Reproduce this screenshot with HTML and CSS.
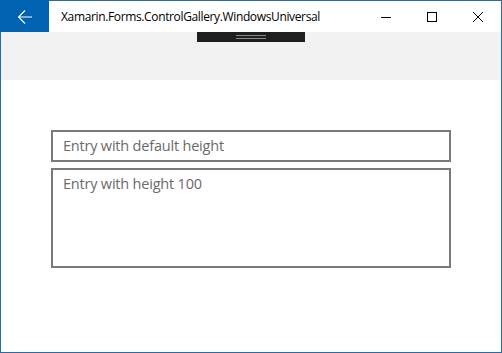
FILE: index.html
```html
<!DOCTYPE html>
<html>
<head>
<meta charset="utf-8">
<link rel="stylesheet" href="styles.css">
</head>
<body>
<div class="window">
  <div class="titlebar">
    <div class="back">
      <svg width="16" height="16" viewBox="0 0 16 16"><path d="M15 8H1.5M8 1.5L1.5 8L8 14.5" fill="none" stroke="#fff" stroke-width="1.1"/></svg>
    </div>
    <div class="title">Xamarin.Forms.ControlGallery.WindowsUniversal</div>
    <div class="caption">
      <div class="cbtn"><svg width="10" height="10" viewBox="0 0 10 10"><path d="M0 5.5H10" stroke="#000" stroke-width="1"/></svg></div>
      <div class="cbtn"><svg width="10" height="10" viewBox="0 0 10 10"><rect x="0.5" y="0.5" width="9" height="9" fill="none" stroke="#000" stroke-width="1"/></svg></div>
      <div class="cbtn"><svg width="10" height="10" viewBox="0 0 10 10"><path d="M0 0L10 10M10 0L0 10" stroke="#000" stroke-width="1"/></svg></div>
    </div>
  </div>
  <div class="toolbar">
    <div class="grip"><span class="line"></span><span class="line"></span></div>
  </div>
  <div class="content">
    <div class="entry single">Entry with default height</div>
    <div class="entry tall">Entry with height 100</div>
  </div>
</div>
</body>
</html>
```
FILE: styles.css
```css
html, body {
  margin: 0;
  padding: 0;
  background: #fff;
}
body {
  width: 502px;
  height: 353px;
  overflow: hidden;
  font-family: "Open Sans", "Noto Sans", sans-serif;
}
.window {
  box-sizing: border-box;
  width: 502px;
  height: 353px;
  border: 1px solid #2a6aa5;
  display: flex;
  flex-direction: column;
  background: #fff;
}
.titlebar {
  height: 31px;
  display: flex;
  align-items: center;
  background: #fff;
}
.back {
  width: 48px;
  height: 31px;
  margin-left: -1px;
  margin-top: -1px;
  padding-top: 1px;
  padding-left: 1px;
  background: #0063b1;
  display: flex;
  align-items: center;
  justify-content: center;
}
.back svg { display: block; }
.title {
  flex: 1;
  padding-left: 12px;
  font-size: 12px;
  letter-spacing: -0.36px;
  color: #000;
  white-space: nowrap;
}
.caption {
  display: flex;
  height: 31px;
}
.cbtn {
  width: 46px;
  height: 31px;
  display: flex;
  align-items: center;
  justify-content: center;
}
.cbtn svg { display: block; }
.toolbar {
  height: 48px;
  background: #f2f2f2;
  display: flex;
  justify-content: center;
}
.grip {
  width: 108px;
  height: 10px;
  background: #1f1f1f;
  display: flex;
  flex-direction: column;
  align-items: center;
  justify-content: center;
  gap: 2px;
}
.grip .line {
  display: block;
  width: 30px;
  height: 1px;
  background: #8a8a8a;
}
.content {
  flex: 1;
  padding: 50px 0 0 50px;
  display: flex;
  flex-direction: column;
  gap: 6px;
}
.entry {
  box-sizing: border-box;
  width: 400px;
  border: 2px solid #7a7a7a;
  padding: 0 10px;
  font-size: 14.5px;
  color: #6b6b6b;
  letter-spacing: -0.2px;
  white-space: nowrap;
}
.single {
  height: 32px;
  line-height: 28px;
}
.tall {
  height: 100px;
  line-height: 28px;
}
```
